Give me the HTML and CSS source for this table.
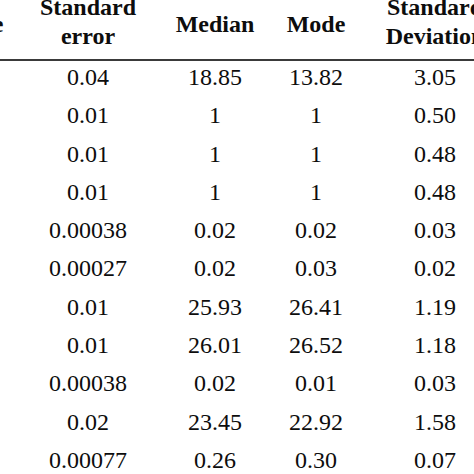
FILE: index.html
```html
<!DOCTYPE html>
<html lang="en">
<head>
<meta charset="utf-8">
<title>Descriptive statistics</title>
<link rel="stylesheet" href="styles.css">
</head>
<body>
<table class="stats">
  <colgroup>
    <col class="c0"><col class="c1"><col class="c2"><col class="c3"><col class="c4">
  </colgroup>
  <thead>
    <tr>
      <th class="first single">Range</th>
      <th>Standard<br>error</th>
      <th class="single">Median</th>
      <th class="single">Mode</th>
      <th>Standard<br>Deviation</th>
    </tr>
  </thead>
  <tbody>
    <tr><td></td><td>0.04</td><td>18.85</td><td>13.82</td><td>3.05</td></tr>
    <tr><td></td><td>0.01</td><td>1</td><td>1</td><td>0.50</td></tr>
    <tr><td></td><td>0.01</td><td>1</td><td>1</td><td>0.48</td></tr>
    <tr><td></td><td>0.01</td><td>1</td><td>1</td><td>0.48</td></tr>
    <tr><td></td><td>0.00038</td><td>0.02</td><td>0.02</td><td>0.03</td></tr>
    <tr><td></td><td>0.00027</td><td>0.02</td><td>0.03</td><td>0.02</td></tr>
    <tr><td></td><td>0.01</td><td>25.93</td><td>26.41</td><td>1.19</td></tr>
    <tr><td></td><td>0.01</td><td>26.01</td><td>26.52</td><td>1.18</td></tr>
    <tr><td></td><td>0.00038</td><td>0.02</td><td>0.01</td><td>0.03</td></tr>
    <tr><td></td><td>0.02</td><td>23.45</td><td>22.92</td><td>1.58</td></tr>
    <tr><td></td><td>0.00077</td><td>0.26</td><td>0.30</td><td>0.07</td></tr>
  </tbody>
</table>
</body>
</html>
```
FILE: styles.css
```css
html, body {
  margin: 0;
  padding: 0;
  background: #ffffff;
  overflow: hidden;
}

body {
  width: 474px;
  height: 474px;
}

.stats {
  font-family: "Liberation Serif", "Times New Roman", serif;
  color: #0d0d0d;
  table-layout: fixed;
  border-collapse: separate;
  border-spacing: 0;
  width: 616px;
  margin-left: -100px;
  margin-top: -6.6px;
}

.c0 { width: 124px; }
.c1 { width: 128px; }
.c2 { width: 126px; }
.c3 { width: 76px; }
.c4 { width: 162px; }

.stats th {
  font-size: 24px;
  font-weight: bold;
  line-height: 29px;
  padding: 0 0 7.6px;
  text-align: center;
  vertical-align: middle;
  border-bottom: 2px solid #3a3a3a;
  white-space: nowrap;
}

.stats th.single {
  padding-top: 4px;
}

.stats th.first {
  text-align: right;
  padding-right: 20.5px;
}

.stats td {
  font-size: 24px;
  line-height: 32px;
  padding: 0 0 6.3px;
  text-align: center;
  white-space: nowrap;
}
```
